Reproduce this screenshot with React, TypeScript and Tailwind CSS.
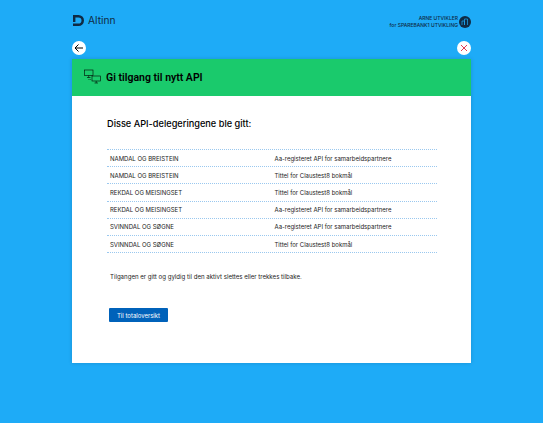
const rows = [
  ["NAMDAL OG BREISTEIN", "Aa-registeret API for samarbeidspartnere"],
  ["NAMDAL OG BREISTEIN", "Tittel for Claustest8 bokmål"],
  ["REKDAL OG MEISINGSET", "Tittel for Claustest8 bokmål"],
  ["REKDAL OG MEISINGSET", "Aa-registeret API for samarbeidspartnere"],
  ["SVINNDAL OG SØGNE", "Aa-registeret API for samarbeidspartnere"],
  ["SVINNDAL OG SØGNE", "Tittel for Claustest8 bokmål"],
];

export default function App() {
  return (
    <div className="min-h-[423px] bg-[#1eabf7] px-[72px] font-['Inter',sans-serif] text-black">
      {/* Header */}
      <div className="flex h-[38px] items-center justify-between pt-[2px]">
        <div className="flex items-center gap-[4px] text-[#0f2a44]">
          <svg width="11" height="11" viewBox="0 0 11 11" className="ml-[1px]">
            <path d="M0 0H5.5A5.5 5.5 0 0 1 5.5 11H0V8.6H5.4A3.1 3.1 0 0 0 5.4 2.4H2.4V7H0Z" fill="#0f2a44" />
          </svg>
          <span className="text-[10.2px] leading-none">Altinn</span>
        </div>
        <div className="mt-[4px] flex items-center gap-[1px]">
          <div className="text-right text-[5px] font-medium leading-[7px] text-[#0f2a44]">
            <div>ARNE UTVIKLER</div>
            <div>for SPAREBANK1 UTVIKLING</div>
          </div>
          <div className="flex h-[12px] w-[12px] items-center justify-center rounded-full bg-[#0f2a44]">
            <svg width="8" height="8" viewBox="0 0 8 8" fill="none" stroke="#1eabf7" strokeWidth="0.7">
              <path d="M1 7V3H3.5V7M3.5 7V1H6.5V7" />
            </svg>
          </div>
        </div>
      </div>

      {/* Back and close */}
      <div className="flex h-[21px] items-start justify-between pt-[3px]">
        <button className="flex h-[14px] w-[14px] items-center justify-center rounded-full bg-white">
          <svg width="10" height="10" viewBox="0 0 10 10" fill="none" stroke="#000" strokeWidth="1">
            <path d="M9 5H1M4.5 1.5 1 5 4.5 8.5" />
          </svg>
        </button>
        <button className="flex h-[14px] w-[14px] items-center justify-center rounded-full bg-white">
          <svg width="8" height="8" viewBox="0 0 8 8" fill="none" stroke="#e23b53" strokeWidth="1">
            <path d="M1 1 7 7M7 1 1 7" />
          </svg>
        </button>
      </div>

      {/* Panel */}
      <div className="shadow-[0_0_4px_rgba(0,0,0,0.15)]">
        <div className="flex h-[37px] items-center gap-[5px] bg-[#1aca6c] pl-[12px]">
          <svg width="17" height="15" viewBox="0 0 17 15" fill="none" stroke="#000" strokeWidth="0.6" className="mb-[2px]">
            <rect x="0.5" y="1" width="8.5" height="5.5" />
            <path d="M3 8.5H6.5M4.7 6.5V8.5" />
            <rect x="8" y="7" width="8.5" height="5" />
            <path d="M10.5 14H14M12.2 12V14" />
            <path d="M4.5 10.5H7" strokeDasharray="1 0.8" />
          </svg>
          <span className="font-['Roboto',sans-serif] text-[10.5px] font-semibold">Gi tilgang til nytt API</span>
        </div>
        <div className="h-[267px] bg-white pl-[35px] pr-[34px] pt-[21px]">
          <h2 className="text-[9.2px] font-medium leading-[14px]">Disse API-delegeringene ble gitt:</h2>
          <div className="mt-[18px] border-t border-dotted border-[#9ac8ef]">
            {rows.map((row, i) => (
              <div key={i} className="flex h-[17.2px] items-center border-b border-dotted border-[#9ac8ef] pl-[3px] text-[6px] text-[#222]">
                <div className="w-[164.5px]">{row[0]}</div>
                <div>{row[1]}</div>
              </div>
            ))}
          </div>
          <p className="ml-[3px] mt-[20px] text-[6.1px] leading-[8px] text-[#222]">
            Tilgangen er gitt og gyldig til den aktivt slettes eller trekkes tilbake.
          </p>
          <button className="ml-[2px] mt-[27px] flex h-[14px] w-[59px] items-center justify-center rounded-[1px] bg-[#0062ba] text-[6px] text-white">
            Til totaloversikt
          </button>
        </div>
      </div>
    </div>
  );
}
